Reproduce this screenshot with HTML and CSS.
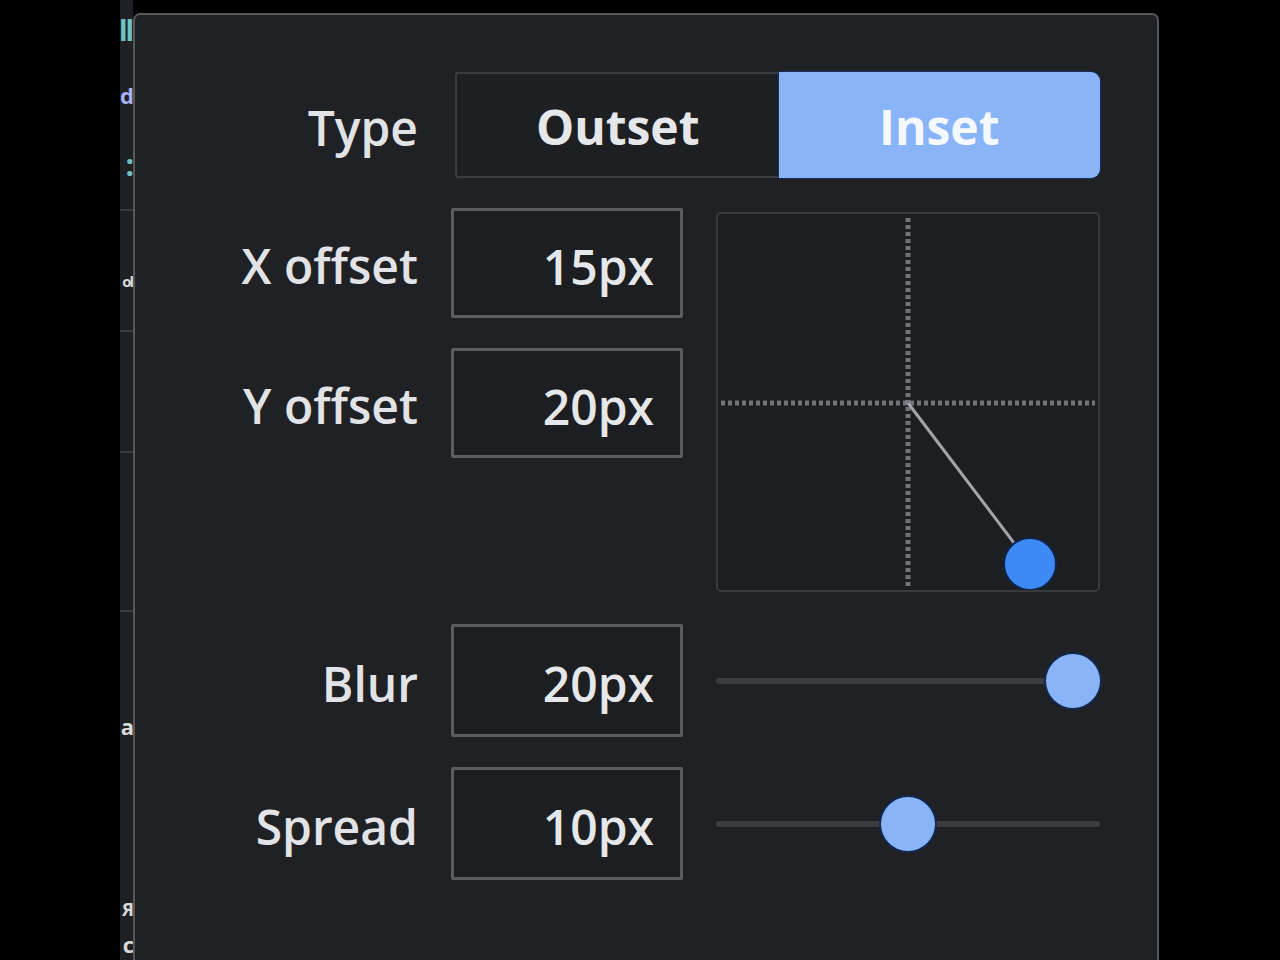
FILE: index.html
```html
<!DOCTYPE html>
<html lang="en">
<head>
<meta charset="utf-8">
<title>Shadow editor</title>
<link rel="stylesheet" href="styles.css">
</head>
<body>
<div class="page">
  <div class="gutter"></div>
  <div class="strip">
    <div class="sl sl-1 cyan">ll</div>
    <div class="sl sl-2 violet">d</div>
    <div class="sl sl-3 cyan">:</div>
    <div class="sep sep-1"></div>
    <div class="sl sl-4 light">ol</div>
    <div class="sep sep-2"></div>
    <div class="sep sep-3"></div>
    <div class="sep sep-4"></div>
    <div class="sl sl-5 light">a</div>
    <div class="sl sl-6 light">Я</div>
    <div class="sl sl-7 light">c</div>
  </div>
  <div class="panel">
    <div class="editor">
      <div class="label r1">Type</div>
      <div class="seg r1">
        <button class="seg-btn">Outset</button>
        <button class="seg-btn active">Inset</button>
      </div>

      <div class="label r2">X offset</div>
      <input class="field r2" type="text" value="15px" readonly>

      <div class="label r3">Y offset</div>
      <input class="field r3" type="text" value="20px" readonly>

      <div class="pad">
        <svg class="pad-svg" width="380" height="376" viewBox="0 0 380 376">
          <line class="axis" x1="190" y1="4" x2="190" y2="372"/>
          <line class="axis" x1="3" y1="189" x2="377" y2="189"/>
          <line class="vec" x1="190" y1="189" x2="312" y2="350"/>
          <circle class="dot" cx="312" cy="350" r="26"/>
        </svg>
      </div>

      <div class="label r5">Blur</div>
      <input class="field r5" type="text" value="20px" readonly>
      <input class="slider r5" type="range" min="0" max="20" value="20">

      <div class="label r6">Spread</div>
      <input class="field r6" type="text" value="10px" readonly>
      <input class="slider r6" type="range" min="0" max="20" value="10">
    </div>
  </div>
  <div class="outside"></div>
</div>
</body>
</html>
```

FILE: styles.css
```css
* { box-sizing: border-box; }

html, body {
  margin: 0;
  padding: 0;
  background: #000;
  width: 1280px;
  height: 960px;
  overflow: hidden;
  font-family: "Open Sans", "Noto Sans", sans-serif;
}

.page {
  display: flex;
  height: 960px;
}

.gutter {
  width: 120px;
  flex: none;
  background: #000;
}

/* underlying page fragment seen behind the popover */
.strip {
  width: 13px;
  flex: none;
  background: #1f2023;
  display: flex;
  flex-direction: column;
  overflow: hidden;
}

.sl {
  height: 40px;
  flex: none;
  display: flex;
  justify-content: flex-end;
  align-items: center;
  white-space: nowrap;
  font-size: 22px;
  font-weight: 700;
  line-height: 40px;
  letter-spacing: -2px;
  padding-right: 1px;
}
.sl-1 { margin-top: 10px; font-size: 28px; }
.sl-2 { margin-top: 25px; }
.sl-3 { margin-top: 30px; font-size: 30px; }
.sep-1 { margin-top: 24px; }
.sl-4 { margin-top: 50px; font-size: 15px; }
.sep-2 { margin-top: 29px; }
.sep-3 { margin-top: 119px; }
.sep-4 { margin-top: 157px; }
.sl-5 { margin-top: 94px; }
.sl-6 { margin-top: 143px; font-size: 18px; }
.sl-7 { margin-top: 0; height: 30px; line-height: 30px; }

.sep {
  height: 2px;
  flex: none;
  background: #3b3c40;
}

.cyan { color: #6fc2c2; }
.violet { color: #a9b0f2; }
.light { color: #d9d9d9; }

.panel {
  width: 1026px;
  flex: none;
  margin-top: 13px;
  background: #202125;
  border: 2px solid #55575b;
  border-bottom: none;
  border-radius: 7px 7px 0 0;
  padding: 57px 0 0 0;
}

.outside {
  flex: 1;
  background: #000;
}

.editor {
  display: grid;
  grid-template-columns: 283px 232px 384px;
  grid-template-rows: 106px 110px 110px 106px 113px 113px;
  column-gap: 33px;
  row-gap: 30px;
  color: #e4e5e8;
}

.r1 { grid-row: 1; }
.r2 { grid-row: 2; }
.r3 { grid-row: 3; }
.r5 { grid-row: 5; }
.r6 { grid-row: 6; }

.label {
  grid-column: 1;
  align-self: center;
  justify-self: end;
  font-size: 48px;
  font-weight: 600;
  line-height: 1;
  padding-top: 6px;
  color: #e2e3e6;
}

.seg {
  grid-column: 2 / 4;
  display: flex;
  margin-left: 4px;
}

.seg-btn {
  flex: 1;
  font-family: "Open Sans", "Noto Sans", sans-serif;
  font-size: 48px;
  font-weight: 700;
  color: #e6e7ea;
  background: #1e1f22;
  border: 2px solid #3b3c40;
  border-right: none;
  border-radius: 3px 0 0 3px;
  padding: 2px 0 0 0;
  cursor: pointer;
}

.seg-btn.active {
  background: #8ab4f8;
  color: #f4f8ff;
  border: none;
  border-radius: 0 9px 9px 0;
  box-shadow: 0 0 0 1px #17315c;
}

.field {
  grid-column: 2;
  width: 232px;
  height: 100%;
  background: #1d1e21;
  border: 3px solid #5b5d61;
  border-radius: 2px;
  color: #e6e7ea;
  font-family: "Open Sans", "Noto Sans", sans-serif;
  font-size: 48px;
  font-weight: 600;
  text-align: right;
  padding: 6px 26px 0 0;
  outline: none;
}

.pad {
  grid-column: 3;
  grid-row: 2 / 5;
  margin-top: 4px;
  margin-bottom: 2px;
  border: 2px solid #393a3e;
  border-radius: 5px;
  background: #1d1e21;
}

.pad-svg {
  display: block;
}

.axis {
  stroke: #8e9095;
  stroke-width: 5;
  stroke-dasharray: 4 3;
  opacity: 0.75;
}

.vec {
  stroke: #a3a5aa;
  stroke-width: 3;
}

.dot {
  fill: #3d8af7;
  stroke: #10254a;
  stroke-width: 2;
}

.slider {
  grid-column: 3;
  align-self: center;
  -webkit-appearance: none;
  appearance: none;
  width: 384px;
  height: 58px;
  margin: 0;
  background: transparent;
}

.slider::-webkit-slider-runnable-track {
  height: 6px;
  background: #3c3d41;
  border-radius: 3px;
}

.slider::-webkit-slider-thumb {
  -webkit-appearance: none;
  appearance: none;
  width: 54px;
  height: 54px;
  margin-top: -24px;
  border-radius: 50%;
  background: #8ab4f8;
  box-shadow: 0 0 0 2px #12284d;
  border: none;
}
```
